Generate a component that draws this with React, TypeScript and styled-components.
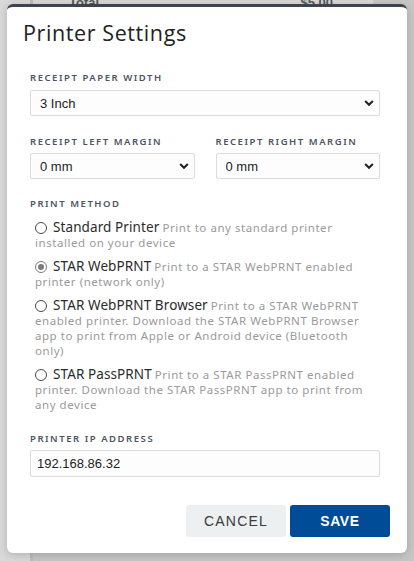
import React, { useState } from "react";
import styled, { createGlobalStyle } from "styled-components";

const GlobalStyle = createGlobalStyle`
  html, body { margin: 0; padding: 0; }
  body { font-family: "Noto Sans", "Open Sans", sans-serif; width: 414px; height: 561px; overflow: hidden; }
  * { box-sizing: border-box; }
`;

const Backdrop = styled.div`
  position: relative;
  width: 414px;
  height: 561px;
  display: flex;
  background: #c6c6c6;
  overflow: hidden;
`;

const SideStrip = styled.div`
  width: 33px;
  background: #d9d9d9;
  border-right: 3px solid #bcbcbc;
`;

const MainArea = styled.div`
  flex: 1;
  display: flex;
  flex-direction: column;
`;

const BehindCard = styled.div`
  width: 342px;
  height: 553px;
  background: #d8d8d8;
  border-right: 2px solid #c9c9c9;
  padding: 0 0 0 36px;
  font: 600 13px "Liberation Sans", sans-serif;
  color: #555;
  display: flex;
  justify-content: space-between;
  line-height: 6px;
  overflow: hidden;
`;

const BehindPrice = styled.span`
  padding-right: 40px;
`;

const Modal = styled.div`
  position: absolute;
  left: 7px;
  top: 4px;
  width: 400px;
  height: 549px;
  background: #fff;
  border-top: 3px solid #3d434f;
  border-radius: 6px;
  box-shadow: 0 2px 8px rgba(0, 0, 0, 0.18);
  display: flex;
  flex-direction: column;
`;

const Title = styled.h2`
  margin: 0;
  padding: 12px 16px 0;
  font-family: "Open Sans", "Noto Sans", sans-serif;
  font-weight: 400;
  font-size: 21.5px;
  line-height: 28px;
  color: #222;
  letter-spacing: 0.6px;
`;

const Body = styled.div`
  padding: 25px 27px 0 23px;
  display: flex;
  flex-direction: column;
`;

const Field = styled.div<{ $mt?: number }>`
  display: flex;
  flex-direction: column;
  margin-top: ${(p) => p.$mt ?? 0}px;
  min-width: 0;
`;

const Row = styled.div`
  display: grid;
  grid-template-columns: 1fr 1fr;
  column-gap: 21px;
  margin-top: 20px;
`;

const Label = styled.label<{ $gap?: number }>`
  display: block;
  font-family: "Noto Sans", sans-serif;
  font-size: 9.5px;
  font-weight: 600;
  line-height: 12px;
  letter-spacing: 1.55px;
  color: #4c5361;
  text-transform: uppercase;
  margin-bottom: ${(p) => p.$gap ?? 6}px;
`;

const SelectWrap = styled.div`
  position: relative;
  height: 26px;
`;

const Select = styled.select`
  appearance: none;
  -webkit-appearance: none;
  width: 100%;
  height: 26px;
  border: 1px solid #dcdcdc;
  border-radius: 2px;
  background: #fdfdfd;
  font-family: "Liberation Sans", Arial, sans-serif;
  font-size: 13px;
  color: #222;
  padding: 0 24px 0 9px;
  outline: none;
`;

const Chevron = styled.svg`
  position: absolute;
  right: 6px;
  top: 9px;
  width: 10px;
  height: 8px;
  pointer-events: none;
`;

const RadioList = styled.div`
  display: flex;
  flex-direction: column;
  gap: 9px;
  margin-top: 10px;
  padding-left: 5px;
`;

const RadioItem = styled.label`
  display: block;
  font-size: 11.5px;
  line-height: 15px;
  cursor: pointer;
`;

const RadioCircle = styled.span<{ $checked?: boolean }>`
  display: inline-block;
  position: relative;
  width: 12px;
  height: 12px;
  border-radius: 50%;
  border: 1px solid ${(p) => (p.$checked ? "#7a7a7a" : "#4a4a4a")};
  vertical-align: -2px;
  margin-right: 6px;
  background: #fff;
  &::after {
    content: "";
    display: ${(p) => (p.$checked ? "block" : "none")};
    position: absolute;
    left: 2px;
    top: 2px;
    width: 6px;
    height: 6px;
    border-radius: 50%;
    background: #7a7a7a;
  }
`;

const OptTitle = styled.span`
  font-size: 13.5px;
  color: #2b2b2b;
  letter-spacing: 0.1px;
`;

const OptDesc = styled.span`
  color: #9a9a9a;
  letter-spacing: 0.55px;
`;

const TextInput = styled.input`
  width: 100%;
  height: 27px;
  border: 1px solid #dcdcdc;
  border-radius: 2px;
  background: #fdfdfd;
  font-family: "Liberation Sans", Arial, sans-serif;
  font-size: 13px;
  color: #222;
  padding: 0 6px;
  outline: none;
`;

const Footer = styled.div`
  display: flex;
  justify-content: flex-end;
  gap: 4px;
  padding: 28px 17px 0 0;
`;

const Button = styled.button<{ $primary?: boolean }>`
  width: 100px;
  height: 32px;
  border: none;
  border-radius: 3px;
  font-family: "Liberation Sans", Arial, sans-serif;
  font-size: 14px;
  letter-spacing: ${(p) => (p.$primary ? "0.6px" : "1.2px")};
  font-weight: ${(p) => (p.$primary ? 600 : 400)};
  background: ${(p) => (p.$primary ? "#004c97" : "#ecf0f1")};
  color: ${(p) => (p.$primary ? "#fff" : "#3a3a3a")};
  cursor: pointer;
`;

const ChevronIcon = () => (
  <Chevron viewBox="0 0 10 8">
    <path d="M1.2 2 L5 5.8 L8.8 2" fill="none" stroke="#222" strokeWidth="2" />
  </Chevron>
);

const methods = [
  { t: "Standard Printer", d: "Print to any standard printer installed on your device" },
  { t: "STAR WebPRNT", d: "Print to a STAR WebPRNT enabled printer (network only)" },
  {
    t: "STAR WebPRNT Browser",
    d: "Print to a STAR WebPRNT enabled printer. Download the STAR WebPRNT Browser app to print from Apple or Android device (Bluetooth only)",
  },
  {
    t: "STAR PassPRNT",
    d: "Print to a STAR PassPRNT enabled printer. Download the STAR PassPRNT app to print from any device",
  },
];

export default function App() {
  const [method, setMethod] = useState(1);
  return (
    <>
      <GlobalStyle />
      <Backdrop>
        <SideStrip />
        <MainArea>
          <BehindCard>
            <span>Total</span>
            <BehindPrice>$5.00</BehindPrice>
          </BehindCard>
        </MainArea>
        <Modal>
          <Title>Printer Settings</Title>
          <Body>
            <Field>
              <Label>Receipt Paper Width</Label>
              <SelectWrap>
                <Select defaultValue="3">
                  <option value="2">2 Inch</option>
                  <option value="3">3 Inch</option>
                </Select>
                <ChevronIcon />
              </SelectWrap>
            </Field>
            <Row>
              <Field>
                <Label $gap={5}>Receipt Left Margin</Label>
                <SelectWrap>
                  <Select defaultValue="0">
                    <option value="0">0 mm</option>
                  </Select>
                  <ChevronIcon />
                </SelectWrap>
              </Field>
              <Field>
                <Label $gap={5}>Receipt Right Margin</Label>
                <SelectWrap>
                  <Select defaultValue="0">
                    <option value="0">0 mm</option>
                  </Select>
                  <ChevronIcon />
                </SelectWrap>
              </Field>
            </Row>
            <Field $mt={19}>
              <Label $gap={0}>Print Method</Label>
              <RadioList>
                {methods.map((m, i) => (
                  <RadioItem key={m.t} onClick={() => setMethod(i)}>
                    <RadioCircle $checked={method === i} />
                    <OptTitle>{m.t}</OptTitle> <OptDesc>{m.d}</OptDesc>
                  </RadioItem>
                ))}
              </RadioList>
            </Field>
            <Field $mt={21}>
              <Label $gap={5}>Printer IP Address</Label>
              <TextInput defaultValue="192.168.86.32" />
            </Field>
          </Body>
          <Footer>
            <Button>CANCEL</Button>
            <Button $primary>SAVE</Button>
          </Footer>
        </Modal>
      </Backdrop>
    </>
  );
}
